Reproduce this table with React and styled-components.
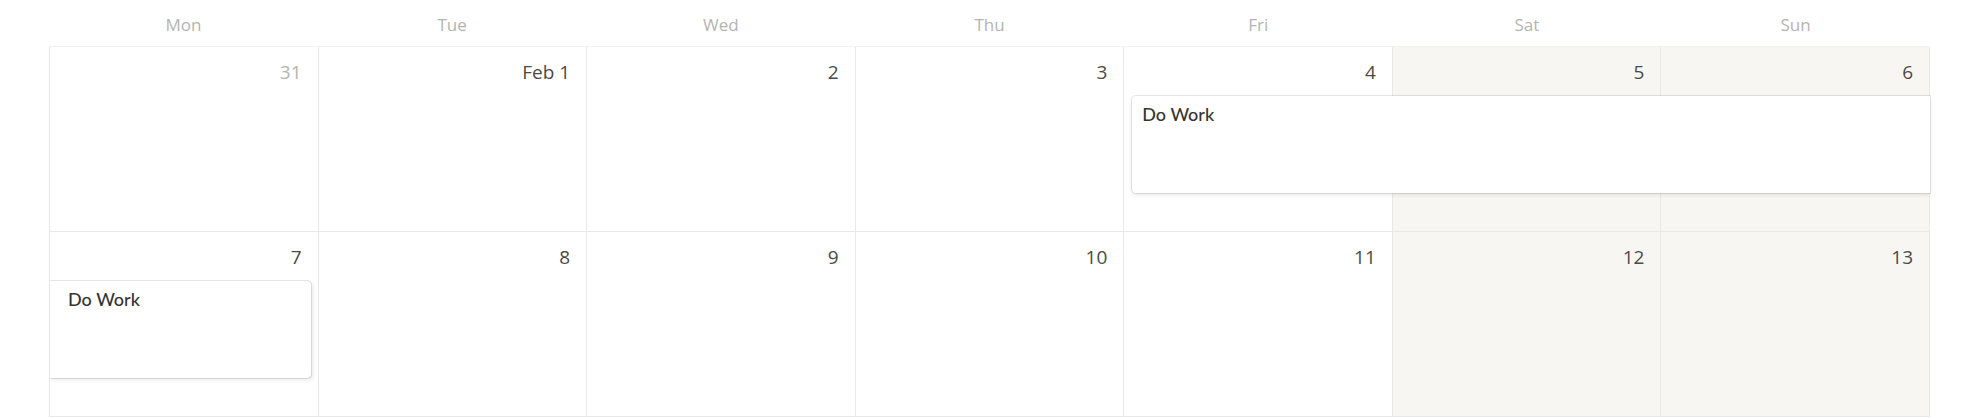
import React from 'react';
import styled, { createGlobalStyle } from 'styled-components';

const GlobalStyle = createGlobalStyle`
  html, body {
    margin: 0;
    padding: 0;
    background: #ffffff;
  }
  body {
    font-family: "Open Sans", "Noto Sans", sans-serif;
    color: #37352f;
  }
`;

const Calendar = styled.div`
  width: 1881px;
  margin-left: 49px;
`;

const HeaderRow = styled.div`
  display: grid;
  grid-template-columns: repeat(7, 1fr);
  height: 46px;
  border-bottom: 1px solid #f0f0ee;
`;

const DayName = styled.div`
  display: flex;
  justify-content: center;
  align-items: center;
  padding-top: 2px;
  font-size: 17px;
  color: #b5b4b0;
`;

const Week = styled.div`
  display: grid;
  grid-template-columns: repeat(7, 1fr);
  grid-template-rows: 184px;
  border-left: 1px solid #e9e9e7;
  border-bottom: 1px solid #e9e9e7;
`;

const Cell = styled.div`
  grid-row: 1;
  grid-column: ${p => p.$col};
  border-right: 1px solid #e9e9e7;
  background: ${p => (p.$weekend ? '#f7f6f3' : '#ffffff')};
  display: flex;
  justify-content: flex-end;
  align-items: flex-start;
  padding: 12px 16px 0 0;
`;

const DayNumber = styled.span`
  font-size: 19px;
  line-height: 26px;
  color: ${p => (p.$muted ? '#b5b4b0' : '#4b4a45')};
`;

const EventCard = styled.div`
  grid-row: 1;
  grid-column: ${p => p.$span};
  align-self: start;
  margin-top: 49px;
  margin-left: ${p => (p.$continued ? '0' : '8px')};
  margin-right: ${p => (p.$continues ? '0' : '8px')};
  height: 97px;
  box-sizing: border-box;
  padding: 6px 10px 0 ${p => (p.$continued ? '18px' : '10px')};
  background: #ffffff;
  border-radius: ${p =>
    `${p.$continued ? 0 : 4}px ${p.$continues ? 0 : 4}px ${p.$continues ? 0 : 4}px ${p.$continued ? 0 : 4}px`};
  box-shadow: ${p =>
    p.$continued
      ? 'rgba(15, 15, 15, 0.1) 1px 0 0 0, rgba(15, 15, 15, 0.1) 0 1px 0 0, rgba(15, 15, 15, 0.1) 0 -1px 0 0, rgba(15, 15, 15, 0.1) 2px 2px 4px'
      : 'rgba(15, 15, 15, 0.1) 0 0 0 1px, rgba(15, 15, 15, 0.1) 0 2px 4px'};
  position: relative;
  z-index: 1;
`;

const EventTitle = styled.div`
  font-family: "Lato", "Open Sans", sans-serif;
  font-size: 18px;
  line-height: 24px;
  font-weight: 500;
  color: #37352f;
`;

const dayNames = ['Mon', 'Tue', 'Wed', 'Thu', 'Fri', 'Sat', 'Sun'];

const weeks = [
  {
    days: [
      { label: '31', muted: true },
      { label: 'Feb 1' },
      { label: '2' },
      { label: '3' },
      { label: '4' },
      { label: '5' },
      { label: '6' },
    ],
    events: [{ title: 'Do Work', span: '5 / 8', continues: true }],
  },
  {
    days: [
      { label: '7' },
      { label: '8' },
      { label: '9' },
      { label: '10' },
      { label: '11' },
      { label: '12' },
      { label: '13' },
    ],
    events: [{ title: 'Do Work', span: '1 / 2', continued: true }],
  },
];

const App = () => {
  return (
    <>
      <GlobalStyle />
      <Calendar>
        <HeaderRow>
          {dayNames.map(name => (
            <DayName key={name}>{name}</DayName>
          ))}
        </HeaderRow>
        {weeks.map((week, wi) => (
          <Week key={wi}>
            {week.days.map((day, di) => (
              <Cell key={di} $col={di + 1} $weekend={di >= 5}>
                <DayNumber $muted={day.muted}>{day.label}</DayNumber>
              </Cell>
            ))}
            {week.events.map((ev, ei) => (
              <EventCard
                key={ei}
                $span={ev.span}
                $continues={ev.continues}
                $continued={ev.continued}
              >
                <EventTitle>{ev.title}</EventTitle>
              </EventCard>
            ))}
          </Week>
        ))}
      </Calendar>
    </>
  );
};

export default App;
